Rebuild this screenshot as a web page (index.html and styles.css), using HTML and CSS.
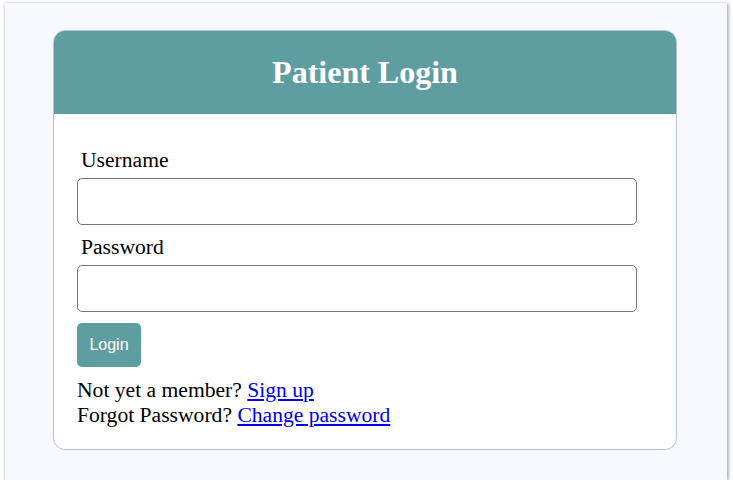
FILE: index.html
```html
<!DOCTYPE html>
<html lang="en">
<head>
<meta charset="utf-8">
<title>Patient Login</title>
<link rel="stylesheet" href="styles.css">
</head>
<body>
<div class="page">
  <div class="card">
    <div class="card-header">
      <h1 class="title">Patient Login</h1>
    </div>
    <form class="card-body">
      <label class="field-label" for="username">Username</label>
      <input class="field-input" id="username" type="text">
      <label class="field-label gap" for="password">Password</label>
      <input class="field-input" id="password" type="password">
      <button class="login-btn" type="button">Login</button>
      <div class="links">
        <div>Not yet a member? <a href="#">Sign up</a></div>
        <div>Forgot Password? <a href="#">Change password</a></div>
      </div>
    </form>
  </div>
</div>
</body>
</html>
```

FILE: styles.css
```css
html, body {
  margin: 0;
  padding: 0;
  background: #ffffff;
}

body {
  font-family: "Liberation Serif", "Times New Roman", serif;
  padding: 3px 0 0 5px;
}

.page {
  box-sizing: border-box;
  width: 722px;
  height: 477px;
  background: #f8f8ff;
  box-shadow: 1px 1px 4px rgba(0, 0, 0, 0.45);
  padding: 27px 0 0 48px;
}

.card {
  box-sizing: border-box;
  width: 624px;
  border: 1px solid #b0c4de;
  border-radius: 12px;
  background: #ffffff;
  overflow: hidden;
}

.card-header {
  height: 83px;
  background: #5f9ea0;
  display: flex;
  align-items: center;
  justify-content: center;
}

.title {
  margin: 0;
  color: #ffffff;
  font-size: 32px;
  font-weight: bold;
  line-height: normal;
}

.card-body {
  display: flex;
  flex-direction: column;
  align-items: flex-start;
  padding: 34px 39px 22px 23px;
  font-size: 21.6px;
  color: #000000;
}

.field-label {
  display: block;
  margin-left: 4px;
  line-height: 24px;
}

.field-label.gap {
  margin-top: 10px;
}

.field-input {
  box-sizing: border-box;
  width: 560px;
  height: 47px;
  margin: 6px 0 0 0;
  border: 1px solid #767676;
  border-radius: 5px;
  background: #ffffff;
  font-size: 16px;
  padding: 0 8px;
}

.login-btn {
  box-sizing: border-box;
  margin-top: 11px;
  width: 64px;
  height: 44px;
  border: none;
  border-radius: 5px;
  background: #5f9ea0;
  color: #ffffff;
  font-family: "Liberation Sans", Arial, sans-serif;
  font-size: 16px;
  padding: 0;
}

.links {
  margin-top: 11px;
  line-height: 24.5px;
}

.links a {
  color: #0000ee;
  text-decoration: underline;
}
```
